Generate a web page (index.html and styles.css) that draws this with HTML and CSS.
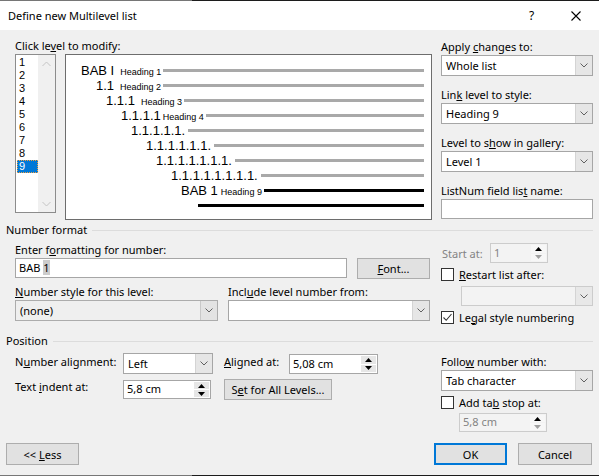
FILE: index.html
```html
<!DOCTYPE html>
<html lang="en">
<head>
    <meta charset="UTF-8">
    <title>Define new Multilevel list</title>
    <link rel="stylesheet" href="styles.css">
</head>
<body>
<div class="dialog">
    <div class="titlebar">
        <span class="title">Define new Multilevel list</span>
        <span class="help">?</span>
        <span class="close">
            <svg width="10" height="10" viewBox="0 0 10 10"><path d="M0.5 0.5 L9.5 9.5 M9.5 0.5 L0.5 9.5" stroke="#000" stroke-width="1.1" fill="none"/></svg>
        </span>
    </div>

    <div class="main">
        <!-- level list + preview + right column -->
        <div class="top">
            <div class="levels-col">
                <div class="lbl">Click le<u>v</u>el to modify:</div>
                <div class="levels-row">
                    <div class="level-list">
                        <div class="items">
                            <div class="item">1</div>
                            <div class="item">2</div>
                            <div class="item">3</div>
                            <div class="item">4</div>
                            <div class="item">5</div>
                            <div class="item">6</div>
                            <div class="item">7</div>
                            <div class="item">8</div>
                            <div class="item sel">9</div>
                        </div>
                        <div class="vscroll">
                            <svg width="9" height="6" viewBox="0 0 9 6"><path d="M0.5 5 L4.5 1 L8.5 5" stroke="#c4c4c4" fill="none"/></svg>
                            <svg width="9" height="6" viewBox="0 0 9 6"><path d="M0.5 1 L4.5 5 L8.5 1" stroke="#c4c4c4" fill="none"/></svg>
                        </div>
                    </div>
                    <div class="preview">
                        <div class="pv-row lv1"><span class="pv-num">BAB I</span><span class="pv-head">Heading 1</span><span class="pv-line"></span></div>
                        <div class="pv-row lv2"><span class="pv-num">1.1</span><span class="pv-head">Heading 2</span><span class="pv-line"></span></div>
                        <div class="pv-row lv3"><span class="pv-num">1.1.1</span><span class="pv-head">Heading 3</span><span class="pv-line"></span></div>
                        <div class="pv-row lv4"><span class="pv-num">1.1.1.1</span><span class="pv-head">Heading 4</span><span class="pv-line"></span></div>
                        <div class="pv-row lv5"><span class="pv-num">1.1.1.1.1.</span><span class="pv-line"></span></div>
                        <div class="pv-row lv6"><span class="pv-num">1.1.1.1.1.1.</span><span class="pv-line"></span></div>
                        <div class="pv-row lv7"><span class="pv-num">1.1.1.1.1.1.1.</span><span class="pv-line"></span></div>
                        <div class="pv-row lv8"><span class="pv-num">1.1.1.1.1.1.1.1.</span><span class="pv-line"></span></div>
                        <div class="pv-row lv9"><span class="pv-num">BAB 1</span><span class="pv-head">Heading 9</span><span class="pv-line dark"></span></div>
                        <div class="pv-row lv10"><span class="pv-line dark"></span></div>
                    </div>
                </div>
            </div>

            <div class="right-col">
                <div class="field">
                    <div class="lbl">Apply <u>c</u>hanges to:</div>
                    <div class="combo">
                        <span class="val">Whole list</span>
                        <span class="drop"><svg width="8" height="5" viewBox="0 0 8 5"><path d="M0.5 0.5 L4 4 L7.5 0.5" stroke="#606060" fill="none"/></svg></span>
                    </div>
                </div>
                <div class="field">
                    <div class="lbl">Lin<u>k</u> level to style:</div>
                    <div class="combo">
                        <span class="val">Heading 9</span>
                        <span class="drop"><svg width="8" height="5" viewBox="0 0 8 5"><path d="M0.5 0.5 L4 4 L7.5 0.5" stroke="#606060" fill="none"/></svg></span>
                    </div>
                </div>
                <div class="field">
                    <div class="lbl">Level to s<u>h</u>ow in gallery:</div>
                    <div class="combo">
                        <span class="val">Level 1</span>
                        <span class="drop"><svg width="8" height="5" viewBox="0 0 8 5"><path d="M0.5 0.5 L4 4 L7.5 0.5" stroke="#606060" fill="none"/></svg></span>
                    </div>
                </div>
                <div class="field">
                    <div class="lbl">ListNum field lis<u>t</u> name:</div>
                    <div class="text-input"></div>
                </div>
            </div>
        </div>

        <!-- Number format -->
        <div class="group-head nf-head">
            <span>Number format</span>
            <span class="group-line"></span>
        </div>
        <div class="nf">
            <div class="nf-left">
                <div class="lbl nf-lbl">Enter f<u>o</u>rmatting for number:</div>
                <div class="nf-row">
                    <div class="text-input fmt"><span>BAB </span><span class="hl">1</span></div>
                    <div class="btn font-btn"><span><u>F</u>ont...</span></div>
                </div>
                <div class="nf-labels">
                    <div class="lbl style-lbl"><u>N</u>umber style for this level:</div>
                    <div class="lbl">Incl<u>u</u>de level number from:</div>
                </div>
                <div class="nf-row">
                    <div class="combo list style-sel">
                        <span class="val">(none)</span>
                        <span class="drop"><svg width="8" height="5" viewBox="0 0 8 5"><path d="M0.5 0.5 L4 4 L7.5 0.5" stroke="#606060" fill="none"/></svg></span>
                    </div>
                    <div class="combo include-sel">
                        <span class="val"></span>
                        <span class="drop"><svg width="8" height="5" viewBox="0 0 8 5"><path d="M0.5 0.5 L4 4 L7.5 0.5" stroke="#606060" fill="none"/></svg></span>
                    </div>
                </div>
            </div>

            <div class="nf-right">
                <div class="start-row">
                    <span class="start-lbl">Start at:</span>
                    <div class="spin disabled start-spin">
                        <span class="val">1</span>
                        <span class="arrows">
                            <span class="arr"><svg width="7" height="4" viewBox="0 0 7 4"><path d="M0 4 L3.5 0 L7 4Z" fill="#000"/></svg></span>
                            <span class="arr"><svg width="7" height="4" viewBox="0 0 7 4"><path d="M0 0 L3.5 4 L7 0Z" fill="#a0a0a0"/></svg></span>
                        </span>
                    </div>
                </div>
                <div class="chk-row restart-row">
                    <span class="chk"></span>
                    <span><u>R</u>estart list after:</span>
                </div>
                <div class="combo disabled restart-sel">
                    <span class="val"></span>
                    <span class="drop"><svg width="8" height="5" viewBox="0 0 8 5"><path d="M0.5 0.5 L4 4 L7.5 0.5" stroke="#606060" fill="none"/></svg></span>
                </div>
                <div class="chk-row legal-row">
                    <span class="chk"><svg width="11" height="11" viewBox="0 0 11 11"><path d="M1.5 5.5 L4.2 8.3 L9.5 2" stroke="#333" stroke-width="1.1" fill="none"/></svg></span>
                    <span>Le<u>g</u>al style numbering</span>
                </div>
            </div>
        </div>

        <!-- Position -->
        <div class="group-head pos-head">
            <span>Position</span>
            <span class="group-line"></span>
        </div>
        <div class="pos">
            <div class="pos-left">
                <div class="pos-row first">
                    <span class="pos-lbl">N<u>u</u>mber alignment:</span>
                    <div class="combo align-sel">
                        <span class="val">Left</span>
                        <span class="drop"><svg width="8" height="5" viewBox="0 0 8 5"><path d="M0.5 0.5 L4 4 L7.5 0.5" stroke="#606060" fill="none"/></svg></span>
                    </div>
                    <span class="pos-lbl aligned-lbl"><u>A</u>ligned at:</span>
                    <div class="spin aligned-spin">
                        <span class="val">5,08 cm</span>
                        <span class="arrows">
                            <span class="arr"><svg width="7" height="4" viewBox="0 0 7 4"><path d="M0 4 L3.5 0 L7 4Z" fill="#000"/></svg></span>
                            <span class="arr"><svg width="7" height="4" viewBox="0 0 7 4"><path d="M0 0 L3.5 4 L7 0Z" fill="#000"/></svg></span>
                        </span>
                    </div>
                </div>
                <div class="pos-row second">
                    <span class="pos-lbl">Text <u>i</u>ndent at:</span>
                    <div class="spin indent-spin">
                        <span class="val">5,8 cm</span>
                        <span class="arrows">
                            <span class="arr"><svg width="7" height="4" viewBox="0 0 7 4"><path d="M0 4 L3.5 0 L7 4Z" fill="#000"/></svg></span>
                            <span class="arr"><svg width="7" height="4" viewBox="0 0 7 4"><path d="M0 0 L3.5 4 L7 0Z" fill="#000"/></svg></span>
                        </span>
                    </div>
                    <div class="btn all-btn"><span>S<u>e</u>t for All Levels...</span></div>
                </div>
            </div>

            <div class="pos-right">
                <div class="lbl follow-lbl">Follo<u>w</u> number with:</div>
                <div class="combo">
                    <span class="val">Tab character</span>
                    <span class="drop"><svg width="8" height="5" viewBox="0 0 8 5"><path d="M0.5 0.5 L4 4 L7.5 0.5" stroke="#606060" fill="none"/></svg></span>
                </div>
                <div class="chk-row tab-row">
                    <span class="chk"></span>
                    <span>Add ta<u>b</u> stop at:</span>
                </div>
                <div class="spin disabled tab-spin">
                    <span class="val">5,8 cm</span>
                    <span class="arrows">
                        <span class="arr"><svg width="7" height="4" viewBox="0 0 7 4"><path d="M0 4 L3.5 0 L7 4Z" fill="#000"/></svg></span>
                        <span class="arr"><svg width="7" height="4" viewBox="0 0 7 4"><path d="M0 0 L3.5 4 L7 0Z" fill="#a0a0a0"/></svg></span>
                    </span>
                </div>
            </div>
        </div>

        <div class="footer">
            <div class="btn less-btn"><span>&lt;&lt; <u>L</u>ess</span></div>
            <div class="spacer"></div>
            <div class="btn default"><span>OK</span></div>
            <div class="btn cancel-btn"><span>Cancel</span></div>
        </div>
    </div>
</div>
</body>
</html>
```

FILE: styles.css
```css
body {
    margin: 0;
    font-family: "Noto Sans", "Open Sans", sans-serif;
    font-size: 11px;
    color: #000;
}
u {
    text-underline-offset: 1px;
}
.dialog {
    width: 599px;
    height: 476px;
    box-sizing: border-box;
    background: #f0f0f0;
    border-top: 1px solid;
    border-bottom: 1px solid;
    border-image: linear-gradient(to right, #767676 0, #767676 192px, #1c1c1c 192px) 1;
    overflow: hidden;
}
.titlebar {
    height: 29px;
    background: #fff;
    display: flex;
    align-items: center;
    padding-left: 8px;
}
.title {
    flex: 1;
}
.help {
    width: 6px;
    font-size: 12px;
    margin-right: 36px;
}
.close {
    display: flex;
    margin-right: 18px;
}
.main {
    padding: 0 6px;
}
.lbl {
    line-height: 16px;
    white-space: nowrap;
}

/* top area */
.top {
    display: flex;
    padding: 8px 0 0 9px;
}
.levels-col {
    width: 417px;
}
.levels-row {
    display: flex;
    align-items: flex-start;
}
.level-list {
    width: 41px;
    height: 159px;
    box-sizing: border-box;
    border: 1px solid #8c8c8c;
    background: #fff;
    display: flex;
}
.items {
    width: 22px;
    padding: 1px 0 0 1px;
    box-sizing: border-box;
}
.item {
    width: 19px;
    height: 13px;
    line-height: 13px;
    padding-left: 2px;
    font-family: "Liberation Sans", Arial, sans-serif;
    font-size: 11px;
}
.item.sel {
    background: #0078d7;
    color: #fff;
    outline: 1px dotted #f0a040;
    outline-offset: -1px;
}
.vscroll {
    flex: 1;
    background: #f0f0f0;
    display: flex;
    flex-direction: column;
    justify-content: space-between;
    align-items: center;
    padding: 6px 0 5px;
}
.preview {
    margin-left: 9px;
    width: 367px;
    height: 166px;
    box-sizing: border-box;
    border: 1px solid #6d6d6d;
    background: #fff;
    padding: 8px 7px 0 0;
    font-family: "Liberation Sans", Arial, sans-serif;
}
.pv-row {
    display: flex;
    align-items: baseline;
    height: 15px;
}
.pv-num {
    font-size: 13px;
    line-height: 15px;
    white-space: nowrap;
}
.pv-head {
    font-size: 9px;
    margin-left: 6px;
    white-space: nowrap;
}
.pv-line {
    flex: 1;
    height: 3px;
    background: #a9a9a9;
    margin-left: 2px;
    align-self: center;
}
.pv-line.dark {
    background: #000;
}
.lv1 { padding-left: 15px; }
.lv2 { padding-left: 30px; }
.lv3 { padding-left: 40px; }
.lv4 { padding-left: 55px; }
.lv4 .pv-head { margin-left: 2px; }
.lv5 { padding-left: 65px; }
.lv6 { padding-left: 80px; }
.lv7 { padding-left: 90px; }
.lv8 { padding-left: 105px; }
.lv9 { padding-left: 115px; }
.lv9 .pv-head { margin-left: 3px; }
.lv10 { padding-left: 130px; }
.lv5 .pv-line, .lv6 .pv-line, .lv7 .pv-line, .lv8 .pv-line { margin-left: 3px; }

.right-col {
    margin-left: 9px;
    width: 152px;
    padding-top: 1px;
}
.field + .field {
    margin-top: 11px;
}

/* controls */
.combo {
    display: flex;
    height: 21px;
    box-sizing: border-box;
    border: 1px solid #a6a6a6;
    background: #fff;
}
.combo .val {
    flex: 1;
    padding-left: 4px;
    line-height: 19px;
    white-space: nowrap;
}
.combo .drop {
    width: 16px;
    border-left: 1px solid #d4d4d4;
    background: #e6e6e6;
    display: flex;
    align-items: center;
    justify-content: center;
}
.combo.list {
    background: #efefef;
    border-color: #acacac;
}
.combo.list .drop {
    background: #e3e3e3;
    border-left-color: #c8c8c8;
}
.combo.disabled {
    background: #f3f3f3;
    border-color: #cccccc;
}
.combo.disabled .drop {
    background: #e8e8e8;
}
.text-input {
    height: 20px;
    box-sizing: border-box;
    border: 1px solid #a6a6a6;
    background: #fff;
}
.spin {
    display: flex;
    box-sizing: border-box;
    border: 1px solid #a6a6a6;
    background: #fff;
}
.spin .val {
    flex: 1;
    padding-left: 3px;
    line-height: 17px;
    white-space: nowrap;
}
.spin .arrows {
    width: 15px;
    display: flex;
    flex-direction: column;
    padding: 1px 1px 1px 0;
    gap: 1px;
}
.spin .arr {
    flex: 1;
    background: #e6e6e6;
    display: flex;
    align-items: center;
    justify-content: center;
}
.spin.disabled {
    border-color: #cccccc;
    background: #f3f3f3;
}
.spin.disabled .val {
    color: #838383;
}
.spin.disabled .arr {
    background: #f7f7f7;
}
.btn {
    box-sizing: border-box;
    border: 1px solid #adadad;
    background: #e1e1e1;
    display: flex;
    align-items: center;
    justify-content: center;
    white-space: nowrap;
}
.btn.default {
    border: 2px solid #0078d7;
}
.chk-row {
    display: flex;
    align-items: center;
    height: 16px;
}
.chk {
    width: 13px;
    height: 13px;
    box-sizing: border-box;
    border: 1px solid #333;
    background: #fff;
    margin-right: 5px;
    display: flex;
    align-items: center;
    justify-content: center;
}

/* group headers */
.group-head {
    display: flex;
    align-items: center;
    line-height: 16px;
}
.group-line {
    flex: 1;
    height: 1px;
    background: #dcdcdc;
    margin-left: 5px;
}
.nf-head {
    margin-top: 2px;
}
.pos-head {
    margin-top: 8px;
}

/* number format */
.nf {
    display: flex;
}
.nf-left {
    width: 424px;
    padding-left: 9px;
    box-sizing: border-box;
}
.nf-lbl {
    margin-top: 4px;
}
.nf-row {
    display: flex;
    align-items: flex-start;
}
.fmt {
    width: 332px;
    padding-left: 3px;
    line-height: 18px;
}
.fmt .hl {
    background: #cccccc;
}
.font-btn {
    margin-left: 10px;
    width: 73px;
    height: 21px;
}
.nf-labels {
    display: flex;
    margin-top: 5px;
}
.style-lbl {
    width: 213px;
}
.style-sel {
    width: 203px;
}
.include-sel {
    margin-left: 10px;
    width: 202px;
}
.nf-right {
    margin-left: 11px;
    width: 152px;
}
.start-row {
    display: flex;
    align-items: center;
    margin-top: 5px;
}
.start-lbl {
    width: 49px;
    padding-left: 1px;
    box-sizing: border-box;
    color: #838383;
}
.start-spin {
    width: 58px;
    height: 20px;
}
.restart-row {
    margin-top: 3px;
}
.restart-sel {
    margin-top: 4px;
    margin-left: 20px;
    width: 132px;
    height: 20px;
}
.legal-row {
    margin-top: 3px;
}

/* position */
.pos {
    display: flex;
}
.pos-left {
    width: 424px;
    padding-left: 9px;
    box-sizing: border-box;
}
.pos-row {
    display: flex;
    align-items: flex-start;
}
.pos-row.first {
    margin-top: 4px;
}
.pos-row.second {
    margin-top: 5px;
}
.pos-lbl {
    width: 108px;
    line-height: 16px;
    white-space: nowrap;
}
.pos-row.first .pos-lbl {
    padding-top: 1px;
}
.align-sel {
    width: 90px;
}
.pos-row .aligned-lbl {
    margin-left: 11px;
    width: 65px;
}
.aligned-spin {
    width: 89px;
    height: 20px;
    margin-top: 1px;
}
.indent-spin {
    width: 88px;
    height: 19px;
    margin-top: 1px;
}
.indent-spin .val {
    line-height: 16px;
}
.all-btn {
    margin-left: 13px;
    width: 108px;
    height: 21px;
}
.pos-right {
    margin-left: 11px;
    width: 152px;
}
.follow-lbl {
    margin-top: 5px;
}
.tab-row {
    margin-top: 3px;
}
.tab-spin {
    margin-top: 3px;
    margin-left: 18px;
    width: 88px;
    height: 19px;
}
.tab-spin .val {
    line-height: 16px;
}

/* footer */
.footer {
    display: flex;
    margin-top: 11px;
    padding-right: 1px;
}
.footer .btn {
    width: 73px;
    height: 22px;
}
.spacer {
    flex: 1;
}
.footer .cancel-btn {
    margin-left: 11px;
    width: 74px;
}
```
